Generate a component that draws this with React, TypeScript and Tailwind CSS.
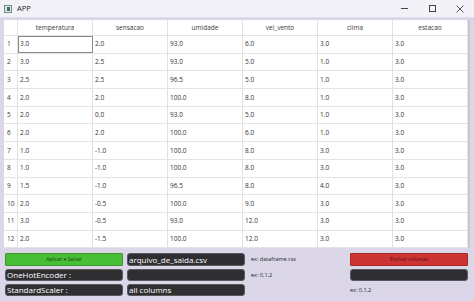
import React from "react";

const cols = ["temperatura", "sensacao", "umidade", "vel_vento", "clima", "estacao"];
const rows = [
  ["3.0", "2.0", "93.0", "6.0", "3.0", "3.0"],
  ["3.0", "2.5", "93.0", "5.0", "1.0", "3.0"],
  ["2.5", "2.5", "96.5", "5.0", "1.0", "3.0"],
  ["2.0", "2.0", "100.0", "8.0", "1.0", "3.0"],
  ["2.0", "0.0", "93.0", "5.0", "1.0", "3.0"],
  ["2.0", "2.0", "100.0", "6.0", "1.0", "3.0"],
  ["1.0", "-1.0", "100.0", "8.0", "3.0", "3.0"],
  ["1.0", "-1.0", "100.0", "8.0", "3.0", "3.0"],
  ["1.5", "-1.0", "96.5", "8.0", "4.0", "3.0"],
  ["2.0", "-0.5", "100.0", "9.0", "3.0", "3.0"],
  ["3.0", "-0.5", "93.0", "12.0", "3.0", "3.0"],
  ["2.0", "-1.5", "100.0", "12.0", "3.0", "3.0"],
];

const font = { fontFamily: '"Open Sans", "Noto Sans", "DejaVu Sans", sans-serif' };

export default function App() {
  return (
    <div className="w-[474px] h-[301px] bg-[#dbd7e9] flex flex-col overflow-hidden" style={font}>
      {/* title bar */}
      <div className="h-[17px] bg-[#f3f2f8] flex items-center shrink-0">
        <div className="ml-[4px] w-[8px] h-[8px] border border-[#6f8a86] bg-[#dfe8e6] flex items-center justify-center">
          <div className="w-[3px] h-[4px] bg-[#3f6f66]" />
        </div>
        <span className="ml-[5px] text-[7.5px] text-[#222] leading-none">APP</span>
        <div className="ml-auto flex items-center h-full">
          <div className="w-[28px] flex items-center justify-center">
            <div className="w-[7px] h-px bg-[#444]" />
          </div>
          <div className="w-[28px] flex items-center justify-center">
            <div className="w-[7px] h-[7px] border border-[#444]" />
          </div>
          <div className="w-[28px] flex items-center justify-center">
            <svg width="8" height="8" viewBox="0 0 8 8">
              <path d="M0.5 0.5 L7.5 7.5 M7.5 0.5 L0.5 7.5" stroke="#444" strokeWidth="0.9" />
            </svg>
          </div>
        </div>
      </div>

      {/* table */}
      <div className="mx-[4px] mt-[3px] h-[228px] bg-white border-r-[2px] border-[#c9c6d3] flex flex-col overflow-hidden">
        <div className="flex h-[16px] shrink-0 border-b border-[#e2e2e2]">
          <div className="w-[14px] shrink-0 border-r border-[#e2e2e2]" />
          {cols.map((c, i) => (
            <div
              key={c}
              className={`${i === 5 ? "flex-1" : "w-[75px]"} shrink-0 border-r border-[#e2e2e2] flex items-center justify-center text-[6.5px] text-[#3a3a3a]`}
            >
              {c}
            </div>
          ))}
        </div>
        {rows.map((r, ri) => (
          <div key={ri} className="flex h-[17.7px] shrink-0 border-b border-[#e4e4e4]">
            <div className="w-[14px] shrink-0 border-r border-[#e2e2e2] flex items-center pl-[3px] text-[6.5px] text-[#3a3a3a]">
              {ri + 1}
            </div>
            {r.map((v, ci) => (
              <div
                key={ci}
                className={`${ci === 5 ? "flex-1" : "w-[75px]"} shrink-0 border-r border-[#e2e2e2] flex items-center pl-[2px] text-[6.5px] text-[#333] ${
                  ri === 0 && ci === 0 ? "outline outline-1 outline-[#8a8a8a] -outline-offset-1" : ""
                }`}
              >
                {v}
              </div>
            ))}
          </div>
        ))}
      </div>

      {/* controls */}
      <div className="mx-[5px] mt-[5px] grid grid-cols-[118px_118px_97px_118px] gap-x-[4px] gap-y-[3px] grid-rows-[13px_12px_12px]">
        <div className="bg-[#46bf36] border border-[#3a9a2e] rounded-[1px] flex items-center justify-center text-[5px] text-[#1a3a10]">
          Aplicar e Salvar
        </div>
        <div className="bg-[#2f2f31] border border-[#5a5a5e] rounded-[3px] flex items-center pl-[1px] text-[8px] text-white leading-none">
          arquivo_de_saida.csv
        </div>
        <div className="flex items-center pl-[2px] text-[5.5px] text-[#222]">ex: dataframe.csv</div>
        <div className="bg-[#cc3434] border border-[#a82828] rounded-[1px] flex items-center justify-center text-[5.5px] text-[#5a1010]">
          Excluir colunas
        </div>

        <div className="bg-[#2f2f31] border border-[#5a5a5e] rounded-[3px] flex items-center pl-[1px] text-[8px] text-white leading-none">
          OneHotEncoder :
        </div>
        <div className="bg-[#2f2f31] border border-[#5a5a5e] rounded-[3px]" />
        <div className="flex items-center pl-[2px] text-[5.5px] text-[#222]">ex: 0,1,2</div>
        <div className="bg-[#2f2f31] border border-[#5a5a5e] rounded-[3px]" />

        <div className="bg-[#2f2f31] border border-[#5a5a5e] rounded-[3px] flex items-center pl-[1px] text-[8px] text-white leading-none">
          StandardScaler :
        </div>
        <div className="bg-[#2f2f31] border border-[#5a5a5e] rounded-[3px] flex items-center pl-[1px] text-[8px] text-white leading-none">
          all columns
        </div>
        <div />
        <div className="flex items-center text-[5.5px] text-[#222]">ex: 0,1,2</div>
      </div>
    </div>
  );
}
